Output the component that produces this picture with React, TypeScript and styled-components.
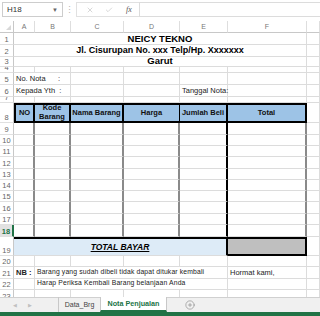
import React from "react";
import styled, { createGlobalStyle } from "styled-components";
import { X, Check, CirclePlus } from "lucide-react";

const GlobalStyle = createGlobalStyle`
  html, body { margin: 0; padding: 0; background: #fff; overflow: hidden; }
  * { box-sizing: border-box; }
`;

const FONT = `"Liberation Sans", Arial, sans-serif`;
const GRID = "#dcdcdc";

const Window = styled.div`
  width: 320px;
  height: 316px;
  display: flex;
  flex-direction: column;
  background: #fff;
  font-family: ${FONT};
  overflow: hidden;
`;

const FormulaBar = styled.div`
  height: 21px;
  flex: none;
  display: flex;
  align-items: flex-start;
  padding: 2px 0 0 2px;
`;

const NameBox = styled.div`
  width: 61px;
  height: 15px;
  border: 1px solid #cdcdcd;
  display: flex;
  align-items: center;
  justify-content: space-between;
  padding: 0 4px 0 4px;
  font-size: 8px;
  color: #333;
`;

const Caret = styled.span`
  font-size: 6px;
  color: #666;
`;

const Dots = styled.div`
  width: 13px;
  height: 15px;
  display: flex;
  align-items: center;
  justify-content: center;
  color: #b5b5b5;
  font-size: 9px;
`;

const FxGroup = styled.div`
  width: 63px;
  height: 15px;
  border: 1px solid #e1e1e1;
  border-right: none;
  display: flex;
  align-items: center;
  padding-left: 9px;
  gap: 11px;
`;

const FxLabel = styled.span`
  font-family: "Liberation Serif", serif;
  font-style: italic;
  font-size: 8px;
  color: #555;
  margin-left: 2px;
`;

const FormulaInput = styled.div`
  flex: 1;
  height: 15px;
  border: 1px solid #dcdcdc;
  border-right: none;
`;

const Sheet = styled.div`
  flex: 1;
  overflow: hidden;
`;

const Grid = styled.div`
  display: grid;
  grid-template-columns: 14px 21px 36px 53px 56px 48px 79px 1fr;
  grid-template-rows: 12px 12px 12px 10px 6px 12px 12px 6px 20px 12px 11px 11px 12px 11px 11px 11px 12px 11px 12px 19px 11px 12px 11px 12px;
`;

const Corner = styled.div`
  border-right: 1px solid #c8c8c8;
  border-bottom: 1px solid #c8c8c8;
  position: relative;
  &::after {
    content: "";
    position: absolute;
    right: 2px;
    bottom: 2px;
    border-left: 5px solid transparent;
    border-bottom: 5px solid #d8d8d8;
  }
`;

const ColHead = styled.div`
  border-right: 1px solid #dedede;
  border-bottom: 1px solid #c8c8c8;
  display: flex;
  align-items: center;
  justify-content: center;
  font-size: 7px;
  color: #777;
`;

const RowHead = styled.div<{ $active?: boolean }>`
  border-right: ${(p) => (p.$active ? "2px solid #217346" : "1px solid #c8c8c8")};
  border-bottom: 1px solid #e0e0e0;
  background: ${(p) => (p.$active ? "#e2e2e2" : "#fff")};
  display: flex;
  align-items: flex-end;
  justify-content: center;
  padding-bottom: 1px;
  font-size: 7.5px;
  line-height: 1;
  color: ${(p) => (p.$active ? "#217346" : "#666")};
  font-weight: ${(p) => (p.$active ? "bold" : "normal")};
  overflow: hidden;
`;

type CellProps = {
  $span?: number;
  $bg?: string;
  $l?: string;
  $t?: string;
  $r?: string;
  $b?: string;
  $justify?: string;
  $valign?: string;
};

const Cell = styled.div<CellProps>`
  grid-column: span ${(p) => p.$span ?? 1};
  background: ${(p) => p.$bg ?? "transparent"};
  border-right: ${(p) => p.$r ?? `1px solid ${GRID}`};
  border-bottom: ${(p) => p.$b ?? `1px solid ${GRID}`};
  border-left: ${(p) => p.$l ?? "none"};
  border-top: ${(p) => p.$t ?? "none"};
  display: flex;
  align-items: ${(p) => p.$valign ?? "flex-end"};
  justify-content: ${(p) => p.$justify ?? "flex-start"};
  white-space: nowrap;
  overflow: visible;
  min-width: 0;
`;

const Title = styled.span<{ $size?: number }>`
  font-weight: bold;
  font-size: ${(p) => p.$size ?? 9.5}px;
  color: #000;
  line-height: 1;
  padding-bottom: 1px;
`;

const Label = styled.span<{ $bold?: boolean }>`
  font-size: 7.5px;
  color: #222;
  line-height: 1;
  padding: 0 0 2px 2px;
  font-weight: ${(p) => (p.$bold ? "bold" : "normal")};
  white-space: pre;
`;

const HeadLabel = styled.span`
  font-size: 7.5px;
  font-weight: bold;
  color: #111;
  text-align: center;
  line-height: 1.15;
`;

const TotalLabel = styled.span`
  font-size: 8.5px;
  font-weight: bold;
  font-style: italic;
  text-decoration: underline;
  color: #000;
`;

const Note = styled.span`
  font-size: 6.8px;
  color: #222;
  line-height: 1;
  padding: 0 0 2px 2px;
  letter-spacing: 0.15px;
`;

const TabBar = styled.div`
  height: 15px;
  flex: none;
  background: #f0f0f0;
  border-top: 1px solid #d0d0d0;
  display: flex;
  align-items: stretch;
`;

const NavArrows = styled.div`
  width: 58px;
  display: flex;
  align-items: center;
  padding-left: 13px;
  gap: 11px;
  color: #c0c0c0;
  font-size: 5px;
`;

const Tab = styled.div<{ $active?: boolean }>`
  display: flex;
  align-items: center;
  width: ${(p) => (p.$active ? "67px" : "42px")};
  justify-content: center;
  margin-top: -1px;
  font-size: ${(p) => (p.$active ? "7.2px" : "7px")};
  border-left: 1px solid #c8c8c8;
  border-right: ${(p) => (p.$active ? "1px solid #c8c8c8" : "none")};
  background: ${(p) => (p.$active ? "#fff" : "transparent")};
  color: ${(p) => (p.$active ? "#217346" : "#444")};
  font-weight: ${(p) => (p.$active ? "bold" : "normal")};
  border-bottom: ${(p) => (p.$active ? "2px solid #217346" : "none")};
  white-space: nowrap;
`;

const AddSheet = styled.div`
  display: flex;
  align-items: center;
  padding-left: 18px;
  color: #777;
`;

const StatusBar = styled.div`
  height: 4px;
  flex: none;
  background: #217346;
`;

const COLS = ["A", "B", "C", "D", "E", "F", ""];
const BK2 = "2px solid #000";
const GR2 = "2px solid #8a8a8a";

type CellDef = CellProps & { key: string; content?: React.ReactNode };

const plain = (n: number, prefix: string): CellDef[] =>
  Array.from({ length: n }, (_, i) => ({ key: `${prefix}-${i}` }));

const rows: { n: number; cells: CellDef[]; active?: boolean }[] = [];

rows.push({ n: 1, cells: [{ key: "t1", $span: 6, $justify: "center", content: <Title>NEICY TEKNO</Title> }, ...plain(1, "g1")] });
rows.push({ n: 2, cells: [{ key: "t2", $span: 6, $justify: "center", content: <Title $size={9}>Jl. Cisurupan No. xxx Telp/Hp. Xxxxxxx</Title> }, ...plain(1, "g2")] });
rows.push({ n: 3, cells: [{ key: "t3", $span: 6, $justify: "center", content: <Title>Garut</Title> }, ...plain(1, "g3")] });
rows.push({ n: 4, cells: plain(7, "r4") });
rows.push({ n: 5, cells: [{ key: "nn", $span: 2, content: <Label>{"No. Nota      :"}</Label> }, ...plain(5, "r5")] });
rows.push({
  n: 6,
  cells: [
    { key: "ky", $span: 2, content: <Label>{"Kepada Yth  :"}</Label> },
    ...plain(2, "r6a"),
    { key: "tn", content: <Label>Tanggal Nota:</Label> },
    ...plain(2, "r6b"),
  ],
});
rows.push({ n: 7, cells: plain(7, "r7") });

const heads: React.ReactNode[] = [
  "NO",
  <>Kode<br />Barang</>,
  "Nama Barang",
  "Harga",
  "Jumlah Beli",
  "Total",
];
const headRight = [BK2, BK2, BK2, "1px solid #000", BK2, BK2];
rows.push({
  n: 8,
  cells: [
    ...heads.map((h, i) => ({
      key: `h${i}`,
      $bg: "#9dc3e6",
      $t: BK2,
      $b: BK2,
      $l: i === 0 ? BK2 : undefined,
      $r: headRight[i],
      $justify: "center",
      $valign: "center",
      content: <HeadLabel>{h}</HeadLabel>,
    })),
    ...plain(1, "g8"),
  ],
});

const bodyRight = [GR2, GR2, GR2, GR2, BK2, GR2];
for (let n = 9; n <= 18; n++) {
  rows.push({
    n,
    active: n === 18,
    cells: [
      ...bodyRight.map((r, i) => ({ key: `b${n}-${i}`, $r: r })),
      ...plain(1, `g${n}`),
    ],
  });
}

rows.push({
  n: 19,
  cells: [
    { key: "tb", $span: 5, $bg: "#ddebf7", $t: BK2, $r: BK2, $justify: "center", $valign: "center", content: <TotalLabel>TOTAL BAYAR</TotalLabel> },
    { key: "tf", $bg: "#bfbfbf", $t: BK2, $r: BK2, $b: BK2 },
    ...plain(1, "g19"),
  ],
});
rows.push({ n: 20, cells: plain(7, "r20") });
rows.push({
  n: 21,
  cells: [
    { key: "nb", content: <Label $bold>NB :</Label> },
    { key: "n1", $span: 4, content: <Note>Barang yang sudah dibeli tidak dapat ditukar kembali</Note> },
    { key: "hk", content: <Label>Hormat kami,</Label> },
    ...plain(1, "g21"),
  ],
});
rows.push({
  n: 22,
  cells: [
    ...plain(1, "r22a"),
    { key: "n2", $span: 4, content: <Note>Harap Periksa Kembali Barang belanjaan Anda</Note> },
    ...plain(2, "r22b"),
  ],
});
rows.push({ n: 23, cells: plain(7, "r23") });

export default function App() {
  return (
    <Window>
      <GlobalStyle />
      <FormulaBar>
        <NameBox>
          H18
          <Caret>▼</Caret>
        </NameBox>
        <Dots>⋮</Dots>
        <FxGroup>
          <X size={8} color="#b0b0b0" strokeWidth={1.5} />
          <Check size={8} color="#b0b0b0" strokeWidth={1.5} />
          <FxLabel>fx</FxLabel>
        </FxGroup>
        <FormulaInput />
      </FormulaBar>
      <Sheet>
        <Grid>
          <Corner />
          {COLS.map((c, i) => (
            <ColHead key={`c${i}`}>{c}</ColHead>
          ))}
          {rows.map((row) => (
            <React.Fragment key={`row${row.n}`}>
              <RowHead $active={row.active}>{row.n}</RowHead>
              {row.cells.map(({ key, content, ...p }) => (
                <Cell key={key} {...p}>
                  {content}
                </Cell>
              ))}
            </React.Fragment>
          ))}
        </Grid>
      </Sheet>
      <TabBar>
        <NavArrows>
          <span>◀</span>
          <span>▶</span>
        </NavArrows>
        <Tab>Data_Brg</Tab>
        <Tab $active>Nota Penjualan</Tab>
        <AddSheet>
          <CirclePlus size={10} strokeWidth={1.3} />
        </AddSheet>
      </TabBar>
      <StatusBar />
    </Window>
  );
}
